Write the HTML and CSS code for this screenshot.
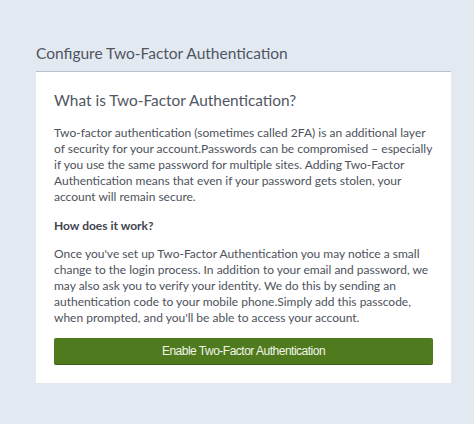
FILE: index.html
```html
<!DOCTYPE html>
<html>
<head>
<meta charset="utf-8">
<link rel="stylesheet" href="styles.css">
</head>
<body>
<div class="page">
  <div class="panel">
    <h1 class="panel-title">Configure Two-Factor Authentication</h1>
    <div class="card">
      <h2 class="card-title">What is Two-Factor Authentication?</h2>
      <p class="text">Two-factor authentication (sometimes called 2FA) is an additional layer<br>of security for your account.Passwords can be compromised – especially<br>if you use the same password for multiple sites. Adding Two-Factor<br>Authentication means that even if your password gets stolen, your<br>account will remain secure.</p>
      <h3 class="sub-title">How does it work?</h3>
      <p class="text">Once you've set up Two-Factor Authentication you may notice a small<br>change to the login process. In addition to your email and password, we<br>may also ask you to verify your identity. We do this by sending an<br>authentication code to your mobile phone.Simply add this passcode,<br>when prompted, and you'll be able to access your account.</p>
      <button class="btn">Enable Two-Factor Authentication</button>
    </div>
  </div>
</div>
</body>
</html>
```
FILE: styles.css
```css
html, body {
  margin: 0;
  padding: 0;
  background: #e3e9f1;
}
.page {
  width: 474px;
  height: 424px;
  box-sizing: border-box;
  padding: 43px 23px 0 36px;
  font-family: Lato, "Open Sans", sans-serif;
}
.panel-title {
  margin: 0;
  font-size: 15.5px;
  line-height: 20px;
  font-weight: 400;
  color: #4f5662;
  padding-bottom: 8px;
  border-bottom: 1px solid #b7c1cc;
}
.card {
  background: #ffffff;
  padding: 18px 18px 19px 18px;
}
.card-title {
  margin: 0;
  font-size: 15.4px;
  line-height: 20px;
  font-weight: 400;
  color: #505663;
}
.text {
  margin: 15px 0 0 0;
  font-size: 12px;
  line-height: 16px;
  color: #4d525c;
  white-space: nowrap;
}
.sub-title {
  margin: 13px 0 0 0;
  font-size: 12px;
  line-height: 16px;
  font-weight: 700;
  color: #3f4450;
}
.sub-title + .text {
  margin-top: 12px;
}
.btn {
  display: block;
  width: 100%;
  height: 26px;
  margin-top: 12px;
  border: none;
  border-radius: 2px;
  background: #4f7a1e;
  box-shadow: 0 1px 0 #3e5f17;
  color: #f2f6ea;
  font-family: "Liberation Sans", Arial, sans-serif;
  font-size: 12px;
  letter-spacing: -0.5px;
  padding: 0;
}
```
